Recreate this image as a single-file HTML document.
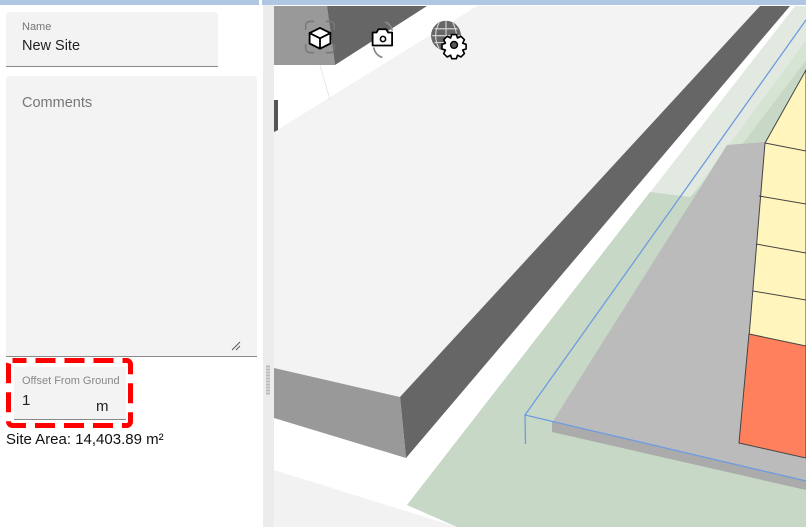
<!DOCTYPE html>
<html><head><meta charset="utf-8"><style>
html,body{margin:0;padding:0;width:806px;height:527px;overflow:hidden;background:#fff;font-family:"Liberation Sans",Roboto,sans-serif;}
.abs{position:absolute;}
</style></head><body>
<div class="abs" style="left:0;top:0;width:806px;height:527px;">
<svg class="abs" style="left:0;top:0" width="806" height="527" viewBox="0 0 806 527">
  <rect x="274" y="0" width="532" height="527" fill="#fff"/>
  <polygon points="274,470 457,527 274,527" fill="#f2f2f2"/>
  <polygon points="795,6 806,6 806,527 457,527 407,505" fill="#e2e9e1"/>
  <polygon points="407,505 650,192 690,197 743,143 806,60 806,527 457,527" fill="#c7d9c6"/>
  <polygon points="690,197 743,143 806,60 806,40 740,130" fill="#d6e4d4"/>
  <polygon points="552,421 806,480 806,490 552,432" fill="#ababab"/>
  <polygon points="553,421 727,145 765,142 806,142 806,480" fill="#bbbbbb"/>
  <polygon points="765,143 806,70 806,352 749,337" fill="#fff5bd" stroke="#444" stroke-width="1"/>
  <line x1="765" y1="143" x2="806" y2="151" stroke="#444" stroke-width="1"/>
  <line x1="759" y1="196" x2="806" y2="204" stroke="#444" stroke-width="1"/>
  <line x1="756" y1="244" x2="806" y2="253" stroke="#444" stroke-width="1"/>
  <line x1="753" y1="291" x2="806" y2="300" stroke="#444" stroke-width="1"/>
  <polygon points="749,334 806,346 806,458 739,443" fill="#ff805c" stroke="#444" stroke-width="1"/>
  <polyline points="806,20 525,415 806,481" fill="none" stroke="#6f9be0" stroke-width="1.3"/>
  <line x1="525" y1="415" x2="525.5" y2="444" stroke="#6f9be0" stroke-width="1.3"/>
  <polygon points="274,132 477,6 760,6 400,397 274,368" fill="#f3f3f3"/>
  <polygon points="760,6 790,6 406,458 400,397" fill="#666"/>
  <polygon points="274,368 400,397 406,458 274,418" fill="#999"/>
  <polygon points="274,6 327,6 335,65 274,65" fill="#999"/>
  <polygon points="327,6 427,6 335,65" fill="#666"/>
  <line x1="320" y1="65" x2="330" y2="100" stroke="#ddd" stroke-width="0.6"/>
  <polygon points="274,100 278,100 278,130 274,132" fill="#555"/>
  <!-- icons -->
  <g fill="none" stroke-linecap="round" stroke-linejoin="round" transform="translate(320,37) scale(1.3) translate(-320,-37)">
    <path d="M309 31v-3a3 3 0 0 1 3-3h3 M325 25h3a3 3 0 0 1 3 3v3 M331 43v3a3 3 0 0 1-3 3h-3 M315 49h-3a3 3 0 0 1-3-3v-3" stroke="#777" stroke-width="1.1"/>
    <path d="M320 30l-8 4v8l8 4 8-4v-8z" fill="#fff" stroke="#000" stroke-width="1.4"/>
    <path d="M312 34l8 4 8-4 M320 38v8" stroke="#000" stroke-width="1.4"/>
  </g>
  <g fill="none" stroke-linecap="round" stroke-linejoin="round" transform="translate(383,39) scale(1.3) translate(-383,-39)">
    <path d="M376 46a9 9 0 0 0 6 7 M390 32a9 9 0 0 0-5-6" stroke="#888" stroke-width="1.3"/>
    <path d="M375 34h3l1.5-2.5h6l1.5 2.5h3v10h-15z" fill="#fff" stroke="#000" stroke-width="1.4"/>
    <circle cx="383" cy="39" r="2" stroke="#000" stroke-width="1.2"/>
  </g>
  <g transform="translate(446,38) scale(1.15) translate(-446,-38)">
  <circle cx="446" cy="36" r="13" fill="#666"/>
  <path d="M434 36h24 M446 23v26 M440 25c-4 7-4 15 0 22 M452 25c4 7 4 15 0 22 M436 30h20 M436 42h20" fill="none" stroke="#ddd" stroke-width="0.9"/>
  <g transform="translate(453,44)">
    <path d="M-2,-9h4l1,3 3,-1.5 3,3 -1.5,3 3,1v4l-3,1 1.5,3 -3,3 -3,-1.5 -1,3h-4l-1,-3 -3,1.5 -3,-3 1.5,-3 -3,-1v-4l3,-1 -1.5,-3 3,-3 3,1.5z" fill="#fff" stroke="#000" stroke-width="1.4" stroke-linejoin="round"/>
    <circle cx="0" cy="0" r="3" fill="#555" stroke="#000" stroke-width="1.2"/>
  </g>
  </g>
  <rect x="0" y="0" width="259" height="5" fill="#b0c7e3"/>
  <rect x="262" y="0" width="544" height="5" fill="#b0c7e3"/>
</svg>

<div class="abs" style="left:0;top:5px;width:263px;height:522px;background:#fff;"></div>
<div class="abs" style="left:263px;top:5px;width:11px;height:522px;background:#ececec;"></div>
<div class="abs" style="left:266px;top:365px;width:4px;height:30px;background-image:radial-gradient(#bbb 0.8px,transparent 1px);background-size:2px 3px;"></div>

<div class="abs" style="left:6px;top:12px;width:212px;height:54px;background:#f3f3f3;border-radius:4px 4px 0 0;border-bottom:1px solid #8a8a8a;"></div>
<div class="abs" style="left:22px;top:21px;font-size:11px;color:#777;">Name</div>
<div class="abs" style="left:22px;top:38px;font-size:14.5px;color:#222;">New Site</div>

<div class="abs" style="left:6px;top:76px;width:251px;height:280px;background:#f3f3f3;border-radius:4px 4px 0 0;border-bottom:1px solid #8a8a8a;"></div>
<div class="abs" style="left:22px;top:95px;font-size:14.5px;color:#777;">Comments</div>
<svg class="abs" style="left:230px;top:340px" width="12" height="12"><path d="M2 10L10 2 M6 10L10 6" stroke="#555" stroke-width="1"/></svg>

<div class="abs" style="left:14px;top:367px;width:112px;height:52px;background:#f3f3f3;border-bottom:1px solid #888;"></div>
<svg class="abs" style="left:0;top:350px" width="150" height="90"><rect x="8.5" y="10.5" width="122" height="65" rx="4" fill="none" stroke="#f00" stroke-width="5" stroke-dasharray="20 9" stroke-dashoffset="6"/></svg>
<div class="abs" style="left:22px;top:375px;font-size:11px;color:#888;">Offset From Ground</div>
<div class="abs" style="left:22px;top:392px;font-size:15px;color:#222;">1</div>
<div class="abs" style="left:96px;top:398px;font-size:15px;color:#222;">m</div>
<div class="abs" style="left:6px;top:431px;font-size:15px;color:#111;">Site Area: 14,403.89 m²</div>
</div>
</body></html>
